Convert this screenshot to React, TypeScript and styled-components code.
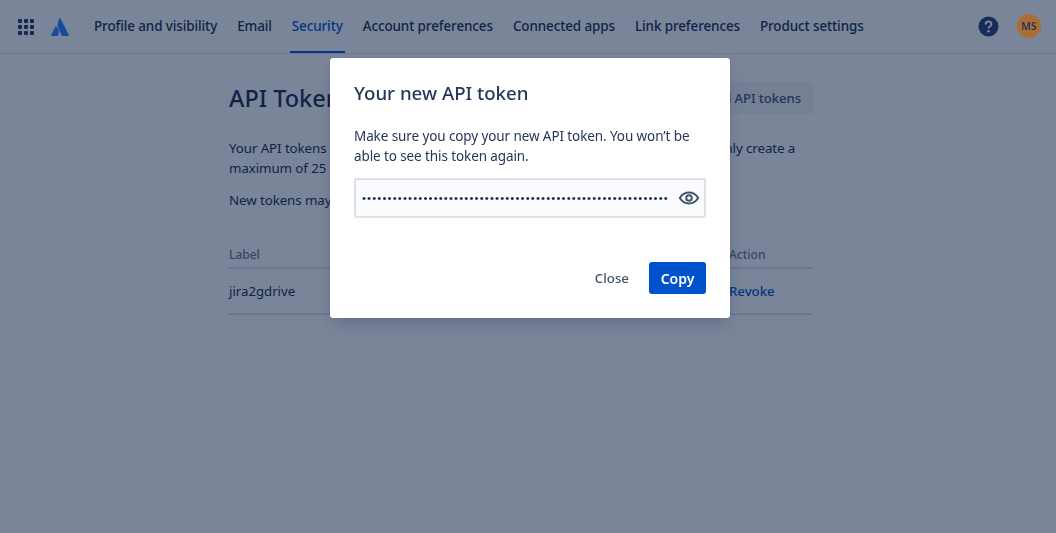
import React from 'react';
import styled, { createGlobalStyle } from 'styled-components';

const FONT = '"Noto Sans", "Open Sans", Arial, sans-serif';

const GlobalStyle = createGlobalStyle`
  html, body {
    margin: 0;
    padding: 0;
    height: 100%;
    background: #fff;
    overflow: hidden;
  }
  body {
    font-family: ${FONT};
    font-size: 14px;
    color: #172b4d;
  }
  * {
    box-sizing: border-box;
  }
`;

const Page = styled.div`
  height: 533px;
  background: #fff;
`;

const TopBar = styled.header`
  display: flex;
  align-items: stretch;
  height: 54px;
  padding: 0 15px 0 18px;
  border-bottom: 1px solid #dfe1e6;
`;

const IconSlot = styled.div`
  display: flex;
  align-items: center;
`;

const LogoSlot = styled(IconSlot)`
  margin-left: 17px;
  margin-right: 23px;
`;

const NavList = styled.nav`
  display: flex;
  flex: 1;
  gap: 16px;
`;

const NavItem = styled.a<{ $active?: boolean }>`
  display: flex;
  align-items: center;
  height: 53px;
  padding: 0 2px;
  font-size: 13.45px;
  letter-spacing: -0.1px;
  font-weight: 500;
  text-decoration: none;
  white-space: nowrap;
  color: ${({ $active }) => ($active ? '#0052cc' : '#172b4d')};
  border-bottom: 2px solid ${({ $active }) => ($active ? '#0052cc' : 'transparent')};
`;

const RightIcons = styled.div`
  display: flex;
  align-items: center;
  gap: 18px;
  padding-bottom: 1px;
`;

// sits above the blanket: the reference keeps this orange brighter than the dimmed page
const Avatar = styled.div`
  position: relative;
  z-index: 1;
  display: flex;
  align-items: center;
  justify-content: center;
  width: 24px;
  height: 24px;
  border-radius: 50%;
  background: #a86e36;
  color: #22345c;
  font-size: 10.5px;
  font-weight: 600;
`;

const Content = styled.main`
  width: 584px;
  margin-left: 229px;
  padding-top: 28px;
`;

const TitleRow = styled.div`
  display: flex;
  align-items: center;
  justify-content: space-between;
  height: 32px;
`;

const PageTitle = styled.h1`
  margin: 0;
  font-size: 23.5px;
  font-weight: 500;
  color: #172b4d;
`;

const GreyButton = styled.button`
  height: 32px;
  padding: 0 12px;
  border: none;
  border-radius: 3px;
  background: #f4f5f7;
  color: #42526e;
  font-family: ${FONT};
  font-size: 13.2px;
  letter-spacing: -0.1px;
  font-weight: 500;
`;

const Para = styled.p`
  margin: 24px 0 0;
  font-size: 13.35px;
  line-height: 20px;
  letter-spacing: -0.1px;
`;

const SmallPara = styled(Para)`
  margin-top: 12px;
`;

const Table = styled.div`
  margin-top: 31px;
`;

const TableHead = styled.div`
  display: grid;
  grid-template-columns: 500px 1fr;
  height: 28px;
  align-items: center;
  border-bottom: 2px solid #dfe1e6;
  font-size: 12px;
  font-weight: 500;
  color: #6b778c;
`;

const TableRow = styled.div`
  display: grid;
  grid-template-columns: 500px 1fr;
  height: 46px;
  align-items: center;
  border-bottom: 2px solid #dfe1e6;
  font-size: 13.2px;
`;

const RevokeLink = styled.a`
  color: #0052cc;
  font-weight: 500;
  text-decoration: none;
`;

const Blanket = styled.div`
  position: fixed;
  inset: 0;
  display: flex;
  justify-content: center;
  align-items: flex-start;
  padding: 58px 0 0 4px;
  background: rgba(9, 30, 66, 0.54);
`;

const Modal = styled.section`
  display: flex;
  flex-direction: column;
  width: 400px;
  height: 260px;
  padding: 22px 24px 24px;
  background: #fff;
  border-radius: 3px;
  box-shadow: 0 8px 16px -4px rgba(9, 30, 66, 0.25), 0 0 1px rgba(9, 30, 66, 0.31);
`;

const ModalTitle = styled.h2`
  margin: 0;
  font-size: 18.7px;
  line-height: 26px;
  font-weight: 500;
  color: #253858;
`;

const ModalBody = styled.p`
  margin: 20px 0 0;
  font-size: 13.5px;
  line-height: 20px;
  letter-spacing: -0.1px;
  color: #253858;
`;

const TokenField = styled.div`
  display: flex;
  align-items: center;
  height: 40px;
  margin-top: 12px;
  padding: 0 4px 0 6px;
  background: #fafbfc;
  border: 2px solid #dfe1e6;
  border-radius: 3px;
`;

const TokenInput = styled.input`
  flex: 1;
  min-width: 0;
  padding: 0;
  border: none;
  outline: none;
  background: transparent;
  color: #172b4d;
  font-family: "Liberation Sans", Arial, sans-serif;
  font-size: 11.5px;
  letter-spacing: 1.09px;
`;

const EyeButton = styled.span`
  display: flex;
  margin-left: 8px;
  color: #42526e;
`;

const ModalFooter = styled.footer`
  display: flex;
  justify-content: flex-end;
  align-items: center;
  gap: 4px;
  margin-top: auto;
`;

const CloseButton = styled.button`
  height: 32px;
  padding: 0 16px;
  border: none;
  background: transparent;
  color: #42526e;
  font-family: ${FONT};
  font-size: 13.3px;
  font-weight: 500;
`;

const CopyButton = styled.button`
  width: 57px;
  height: 32px;
  padding: 0;
  border: none;
  border-radius: 3px;
  background: #0052cc;
  color: #fff;
  font-family: ${FONT};
  font-size: 14px;
  font-weight: 600;
`;

function GridIcon(): React.ReactElement {
  const spots = [0, 6, 12];
  return (
    <svg width="16" height="16" viewBox="0 0 16 16" fill="#253858">
      {spots.map((y) =>
        spots.map((x) => <rect key={`${x}-${y}`} x={x} y={y} width="4" height="4" rx="1" />),
      )}
    </svg>
  );
}

function AtlassianMark(): React.ReactElement {
  return (
    <svg width="18" height="18" viewBox="0 0 24 24" fill="#2684ff">
      <path d="M7.12 11.084a.683.683 0 00-1.16.126L.075 22.974a.703.703 0 00.63 1.018h8.19a.678.678 0 00.63-.39c1.767-3.65.696-9.203-2.406-12.52zM11.434.386a15.515 15.515 0 00-.906 15.317l3.95 7.9a.703.703 0 00.628.388h8.19a.703.703 0 00.63-1.017L12.63.38a.664.664 0 00-1.196.006z" />
    </svg>
  );
}

function HelpIcon(): React.ReactElement {
  return (
    <svg width="21" height="21" viewBox="0 0 21 21">
      <circle cx="10.5" cy="10.5" r="10" fill="#253f70" />
      <path
        d="M7.6 8.4c0-1.7 1.3-2.8 2.9-2.8s2.9 1 2.9 2.6c0 2.3-2.9 2.3-2.9 4.3"
        fill="none"
        stroke="#fff"
        strokeWidth="2"
      />
      <circle cx="10.5" cy="15.3" r="1.3" fill="#fff" />
    </svg>
  );
}

function EyeIcon(): React.ReactElement {
  return (
    <svg width="22" height="22" viewBox="0 0 22 22" fill="none" stroke="currentColor" strokeWidth="2">
      <path d="M1.8 11c2.3-3.6 5.5-5.4 9.2-5.4s6.9 1.8 9.2 5.4c-2.3 3.6-5.5 5.4-9.2 5.4S4.1 14.6 1.8 11z" />
      <circle cx="11" cy="11" r="2.8" />
    </svg>
  );
}

const NAV_ITEMS = [
  'Profile and visibility',
  'Email',
  'Security',
  'Account preferences',
  'Connected apps',
  'Link preferences',
  'Product settings',
];

export default function App(): React.ReactElement {
  return (
    <Page>
      <GlobalStyle />
      <TopBar>
        <IconSlot>
          <GridIcon />
        </IconSlot>
        <LogoSlot>
          <AtlassianMark />
        </LogoSlot>
        <NavList>
          {NAV_ITEMS.map((item) => (
            <NavItem key={item} $active={item === 'Security'}>
              {item}
            </NavItem>
          ))}
        </NavList>
        <RightIcons>
          <HelpIcon />
          <Avatar>MS</Avatar>
        </RightIcons>
      </TopBar>
      <Content>
        <TitleRow>
          <PageTitle>API Tokens</PageTitle>
          <GreyButton>Revoke all API tokens</GreyButton>
        </TitleRow>
        <Para>
          Your API tokens need to be treated as securely as any other password. You can only create a
          maximum of 25 tokens.
        </Para>
        <SmallPara>New tokens may take a few minutes to become active.</SmallPara>
        <Table>
          <TableHead>
            <span>Label</span>
            <span>Action</span>
          </TableHead>
          <TableRow>
            <span>jira2gdrive</span>
            <RevokeLink>Revoke</RevokeLink>
          </TableRow>
        </Table>
      </Content>
      <Blanket>
        <Modal>
          <ModalTitle>Your new API token</ModalTitle>
          <ModalBody>
            Make sure you copy your new API token. You won’t be able to see this token again.
          </ModalBody>
          <TokenField>
            <TokenInput type="password" readOnly value={'x'.repeat(60)} />
            <EyeButton>
              <EyeIcon />
            </EyeButton>
          </TokenField>
          <ModalFooter>
            <CloseButton>Close</CloseButton>
            <CopyButton>Copy</CopyButton>
          </ModalFooter>
        </Modal>
      </Blanket>
    </Page>
  );
}
